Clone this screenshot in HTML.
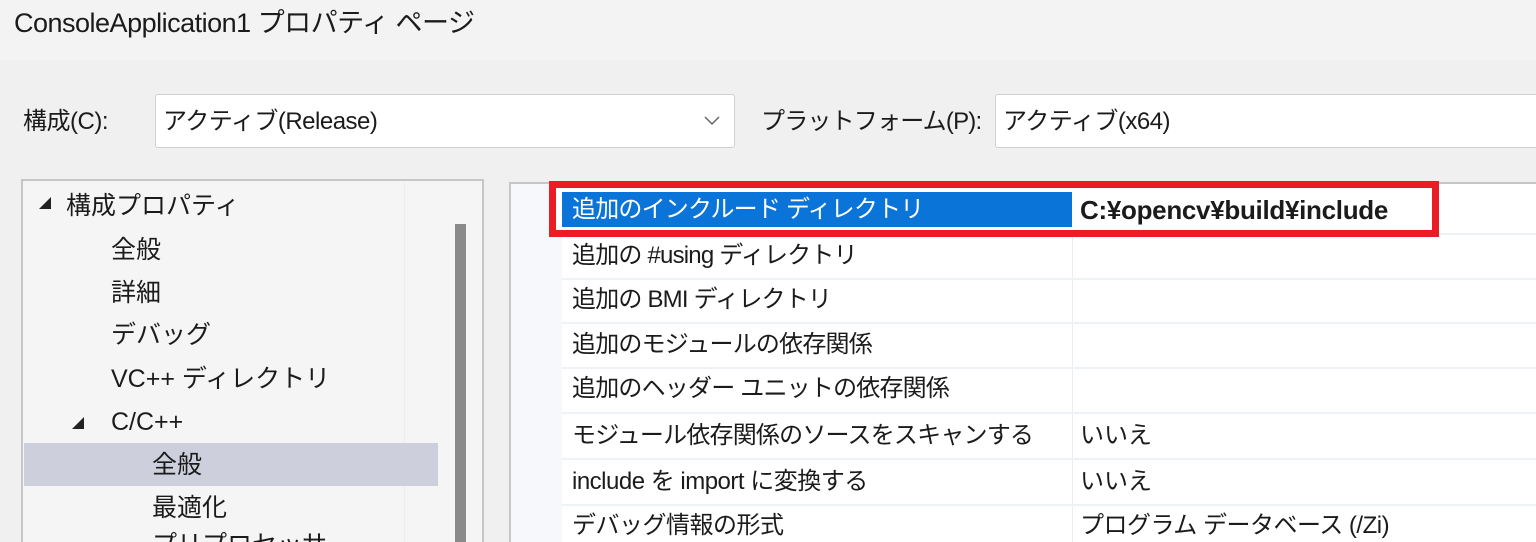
<!DOCTYPE html>
<html style="width:1536px;height:542px;overflow:hidden"><head><meta charset="utf-8"><style>
*{margin:0;padding:0;box-sizing:border-box}
body{width:1536px;height:542px;overflow:hidden;background:#f0f0f0;font-family:"Liberation Sans","Noto Sans CJK JP",sans-serif;color:#1b1b1b;position:relative;font-size:24px}
.a{position:absolute;white-space:nowrap;line-height:30px}
.box{position:absolute;background:#fff;border:1px solid #d0d0d0;border-radius:3px}
</style></head><body>
<div class="a" style="left:0;top:0;width:1536px;height:60px;background:#f3f3f3"></div>
<div class="a" style="left:14px;top:8px;font-size:27px;letter-spacing:-0.5px">ConsoleApplication1 プロパティ ページ</div>
<div class="a" style="left:23px;top:107px;letter-spacing:-0.5px">構成(C):</div>
<div class="box" style="left:155px;top:94px;width:580px;height:54px"></div>
<div class="a" style="left:163px;top:107px;letter-spacing:-0.5px">アクティブ(Release)</div>
<svg class="a" style="left:704px;top:114px" width="16" height="12"><path d="M1 3L8 10L15 3" fill="none" stroke="#666" stroke-width="1.5"/></svg>
<div class="a" style="left:761px;top:107px;letter-spacing:-0.8px">プラットフォーム(P):</div>
<div class="box" style="left:995px;top:94px;width:560px;height:54px"></div>
<div class="a" style="left:1003px;top:107px;letter-spacing:-0.5px">アクティブ(x64)</div>

<div class="a" style="left:21px;top:179px;width:463px;height:380px;background:#f5f5f5;border:2px solid #c6c6c6"></div>
<div class="a" style="left:404px;top:181px;width:1px;height:370px;background:#ececec"></div>
<div class="a" style="left:455px;top:224px;width:11px;height:330px;background:#8a8a8a"></div>
<div class="a" style="left:24px;top:443px;width:414px;height:43px;background:#cdcfdc"></div>
<svg class="a" style="left:38px;top:196px" width="14" height="14"><path d="M13 1V13H1Z" fill="#222"/></svg>
<div class="a" style="left:66px;top:191px;font-size:25px">構成プロパティ</div>
<div class="a" style="left:111px;top:235px;font-size:25px">全般</div>
<div class="a" style="left:111px;top:278px;font-size:25px">詳細</div>
<div class="a" style="left:111px;top:320px;font-size:25px">デバッグ</div>
<div class="a" style="left:111px;top:364px;font-size:25px">VC++ ディレクトリ</div>
<svg class="a" style="left:71px;top:416px" width="14" height="14"><path d="M13 1V13H1Z" fill="#222"/></svg>
<div class="a" style="left:111px;top:407px;font-size:25px">C/C++</div>
<div class="a" style="left:152px;top:450px;font-size:25px">全般</div>
<div class="a" style="left:152px;top:493px;font-size:25px">最適化</div>
<div class="a" style="left:152px;top:530px;font-size:25px">プリプロセッサ</div>

<div class="a" style="left:509px;top:182px;width:1040px;height:380px;background:#f6f8fb;border:2px solid #c6c6c6"></div>
<div class="a" style="left:562px;top:184px;width:980px;height:360px;background:#fff"></div>
<div class="a" style="left:1072px;top:184px;width:1px;height:360px;background:#e8eef6"></div>
<div class="a" style="left:562px;top:278px;width:980px;height:2px;background:#eef2f8"></div>
<div class="a" style="left:562px;top:322px;width:980px;height:2px;background:#eef2f8"></div>
<div class="a" style="left:562px;top:367px;width:980px;height:2px;background:#eef2f8"></div>
<div class="a" style="left:562px;top:412px;width:980px;height:2px;background:#eef2f8"></div>
<div class="a" style="left:562px;top:458px;width:980px;height:2px;background:#eef2f8"></div>
<div class="a" style="left:562px;top:504px;width:980px;height:2px;background:#eef2f8"></div>
<div class="a" style="left:562px;top:233px;width:980px;height:2px;background:#eef2f8"></div>
<div class="a" style="left:549px;top:181px;width:890px;height:56px;border:7px solid #ec1c24;background:#fff"></div>
<div class="a" style="left:562px;top:192px;width:510px;height:35px;background:#0a74d9"></div>
<div class="a" style="left:572px;top:195px;color:#fff;letter-spacing:-0.8px">追加のインクルード ディレクトリ</div>
<div class="a" style="left:1080px;top:195px;font-weight:bold;font-size:26px;letter-spacing:-0.3px">C:¥opencv¥build¥include</div>
<div class="a" style="left:572px;top:241px;letter-spacing:-0.8px">追加の #using ディレクトリ</div>
<div class="a" style="left:572px;top:285px;letter-spacing:-0.8px">追加の BMI ディレクトリ</div>
<div class="a" style="left:572px;top:330px;letter-spacing:-0.8px">追加のモジュールの依存関係</div>
<div class="a" style="left:572px;top:374px;letter-spacing:-0.8px">追加のヘッダー ユニットの依存関係</div>
<div class="a" style="left:572px;top:421px;letter-spacing:-0.8px">モジュール依存関係のソースをスキャンする</div>
<div class="a" style="left:1080px;top:421px">いいえ</div>
<div class="a" style="left:572px;top:467px;letter-spacing:-0.5px">include を import に変換する</div>
<div class="a" style="left:1080px;top:467px">いいえ</div>
<div class="a" style="left:572px;top:511px;letter-spacing:-0.5px">デバッグ情報の形式</div>
<div class="a" style="left:1080px;top:511px;letter-spacing:-0.5px">プログラム データベース (/Zi)</div>
</body></html>
